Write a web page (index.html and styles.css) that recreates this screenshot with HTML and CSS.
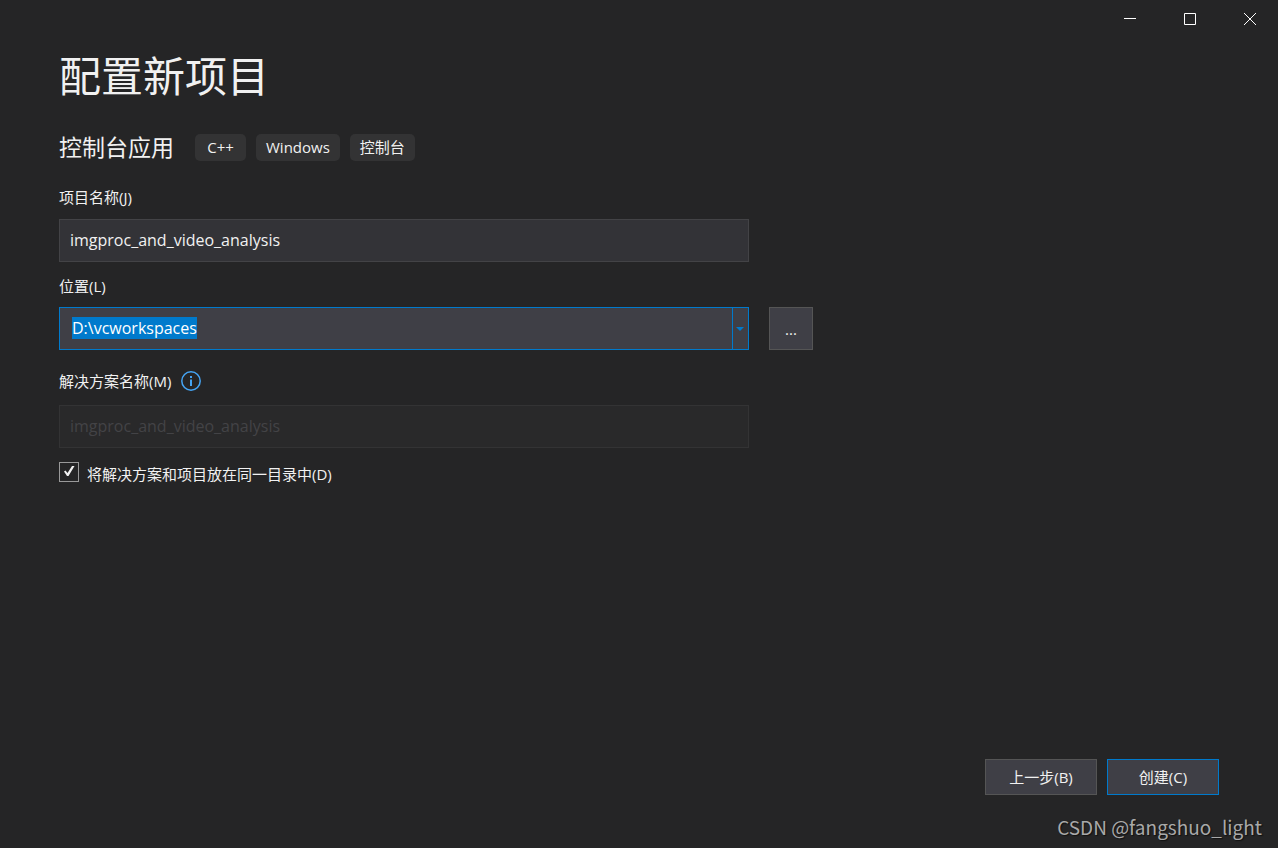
FILE: index.html
```html
<!DOCTYPE html>
<html lang="zh-CN">
<head>
  <meta charset="UTF-8" />
  <meta name="viewport" content="width=device-width, initial-scale=1.0"/>
  <title>配置新项目</title>
  <link rel="stylesheet" href="styles.css">
</head>
<body>
  <div class="window">
    <header class="titlebar">
      <button type="button" class="caption-btn" aria-label="最小化">
        <svg width="14" height="14" viewBox="0 0 14 14"><path d="M1 6.500h12"/></svg>
      </button>
      <button type="button" class="caption-btn" aria-label="最大化">
        <svg width="14" height="14" viewBox="0 0 14 14"><path d="M1.500 1.500h11v11h-11z"/></svg>
      </button>
      <button type="button" class="caption-btn" aria-label="关闭">
        <svg width="14" height="14" viewBox="0 0 14 14"><path d="M1 1l12 12M13 1L1 13"/></svg>
      </button>
    </header>

    <form class="project-form" id="projectForm">
      <h1>配置新项目</h1>

      <div class="template">
        <h2>控制台应用</h2>
        <ul class="tags">
          <li>C++</li>
          <li>Windows</li>
          <li>控制台</li>
        </ul>
      </div>

      <div class="field">
        <label for="projectName">项目名称(J)</label>
        <input type="text" class="text-box" id="projectName" value="imgproc_and_video_analysis">
      </div>

      <div class="field field-location">
        <label for="location">位置(L)</label>
        <div class="location-row">
          <div class="combo">
            <input type="text" class="combo-input" id="location" value="D:\vcworkspaces" spellcheck="false">
            <button type="button" class="combo-arrow" aria-label="最近使用的位置">
              <svg width="8" height="4" viewBox="0 0 8 4"><path d="M0 0h8L4 4z"/></svg>
            </button>
          </div>
          <button type="button" class="browse-btn" aria-label="浏览">...</button>
        </div>
      </div>

      <div class="field field-solution">
        <div class="label-row">
          <label for="solutionName">解决方案名称(M)</label>
          <svg class="info-icon" width="20" height="20" viewBox="0 0 20 20">
            <circle cx="10" cy="10" r="9.200"/>
            <path d="M9 5h2v2H9zM9 8.500h2V15H9z"/>
          </svg>
        </div>
        <input type="text" class="text-box" id="solutionName" value="imgproc_and_video_analysis" disabled>
      </div>

      <div class="check-row">
        <input type="checkbox" id="sameDir" checked>
        <label for="sameDir">将解决方案和项目放在同一目录中(D)</label>
      </div>
    </form>

    <footer class="actions">
      <button type="button" class="btn">上一步(B)</button>
      <button type="submit" class="btn btn-primary" form="projectForm">创建(C)</button>
    </footer>

    <div class="watermark">CSDN @fangshuo_light</div>
  </div>

  <script>
    const locationInput = document.getElementById('location');
    locationInput.focus();
    locationInput.select();
  </script>
</body>
</html>
```

FILE: styles.css
```css
* {
  box-sizing: border-box;
}

body {
  margin: 0;
  background-color: #252526;
  color: #f1f1f1;
  font-family: "Open Sans", "Noto Sans CJK SC", sans-serif;
  font-size: 15px;
  line-height: 20px;
}

button,
input {
  font-family: inherit;
  color: inherit;
}

.window {
  position: relative;
  display: flex;
  flex-direction: column;
  min-height: 100vh;
}

/* Title bar */
.titlebar {
  display: flex;
  justify-content: flex-end;
  gap: 4px;
  height: 38px;
}

.caption-btn {
  display: flex;
  align-items: center;
  justify-content: center;
  width: 56px;
  padding: 0;
  border: none;
  background: none;
}

.caption-btn svg {
  fill: none;
  stroke: #fff;
}

/* Form */
.project-form {
  flex: 1;
  padding: 8px 59px 0;
}

h1 {
  margin: 0;
  font-size: 42px;
  font-weight: normal;
  line-height: 60px;
}

.template {
  display: flex;
  align-items: center;
  gap: 21px;
  margin-top: 23px;
}

h2 {
  margin: 0;
  font-size: 23px;
  font-weight: normal;
  line-height: 36px;
}

.tags {
  display: flex;
  gap: 10px;
  margin: 0;
  padding: 0;
  list-style: none;
}

.tags li {
  min-width: 51px;
  padding: 0 10px;
  border-radius: 5px;
  background-color: #333334;
  line-height: 27px;
  text-align: center;
}

.field {
  max-width: 690px;
  margin-top: 22px;
}

.field label {
  display: block;
}

.text-box {
  display: block;
  width: 100%;
  height: 43px;
  margin-top: 12px;
  padding: 0 10px 2px;
  border: 1px solid #434346;
  background-color: #333337;
  font-size: 16px;
}

.text-box:disabled {
  border-color: #333334;
  background-color: #29292a;
  color: #434346;
}

.field-location {
  max-width: 754px;
  margin-top: 14px;
}

.location-row {
  display: flex;
  gap: 20px;
  margin-top: 11px;
}

.combo {
  display: flex;
  flex: 1;
  height: 43px;
  border: 1px solid #007acc;
  background-color: #3f3f46;
}

.combo-input {
  flex: 1;
  min-width: 0;
  padding: 0 12px 2px;
  border: none;
  outline: none;
  background: none;
  font-size: 16px;
}

.combo-input::selection {
  background-color: #007acc;
  color: #fff;
}

.combo-arrow {
  display: flex;
  align-items: center;
  justify-content: center;
  width: 16px;
  padding: 0 1px 0 0;
  border: none;
  border-left: 1px solid #007acc;
  background: none;
}

.combo-arrow svg {
  fill: #007acc;
}

.browse-btn {
  width: 44px;
  height: 43px;
  padding: 0;
  border: 1px solid #555;
  background-color: #3f3f46;
  font-size: 15px;
}

.field-solution {
  margin-top: 21px;
}

.label-row {
  display: flex;
  align-items: center;
  gap: 10px;
}

.info-icon circle {
  fill: none;
  stroke: #45a5f5;
  stroke-width: 1.5;
}

.info-icon path {
  fill: #45a5f5;
}

.field-solution .text-box {
  margin-top: 14px;
}

/* Check box */
.check-row {
  display: flex;
  align-items: flex-start;
  gap: 8px;
  margin-top: 14px;
}

.check-row input {
  appearance: none;
  width: 20px;
  height: 20px;
  margin: 0;
  border: 1px solid #999;
}

.check-row input:checked {
  background: url("data:image/svg+xml,%3Csvg xmlns='http://www.w3.org/2000/svg' viewBox='0 0 18 18'%3E%3Cpath d='M4 8.500l1.500-1 2 2.500L12 3h2.500L8.500 13H7z' fill='%23f1f1f1'/%3E%3C/svg%3E") center / 18px no-repeat;
}

.check-row label {
  padding-top: 2px;
}

/* Bottom buttons */
.actions {
  display: flex;
  justify-content: flex-end;
  gap: 10px;
  padding: 0 59px 53px;
}

.btn {
  width: 112px;
  height: 36px;
  padding: 0 0 2px;
  border: 1px solid #555;
  background-color: #3f3f46;
  font-size: 15px;
}

.btn-primary {
  border-color: #007acc;
}

.watermark {
  position: absolute;
  right: 16px;
  bottom: 9px;
  color: #a9a9a9;
  font-family: "Noto Sans CJK SC", sans-serif;
  font-size: 19px;
  line-height: 24px;
  text-shadow: 1px 1px 1px #111;
}
```
